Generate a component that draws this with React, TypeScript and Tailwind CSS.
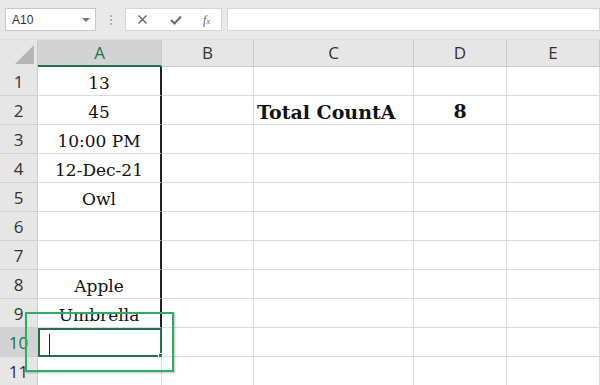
import React from 'react';

const cols = ['A', 'B', 'C', 'D', 'E'];
const widths = ['w-[124px]', 'w-[92px]', 'w-[160px]', 'w-[93px]', 'w-[93px]'];

const colA: Record<number, string> = {
  1: '13',
  2: '45',
  3: '10:00 PM',
  4: '12-Dec-21',
  5: 'Owl',
  8: 'Apple',
  9: 'Umbrella',
};

const serif = { fontFamily: 'Georgia, "DejaVu Serif", serif' };
const sans = { fontFamily: '"Open Sans", "Noto Sans", sans-serif' };

function Toolbar() {
  return (
    <div className="flex h-[40px] items-start bg-[#e8e8e8] pt-[8px] pl-[5px] border-b border-[#dcdcdc]">
      <div className="flex h-[23px] w-[91px] items-center justify-between border border-[#c8c8c8] bg-white pl-[6px] pr-[5px]">
        <span className="text-[12px] text-[#333]" style={{ fontFamily: '"Liberation Sans", Arial, sans-serif' }}>A10</span>
        <span className="h-0 w-0 border-x-[4px] border-t-[4px] border-x-transparent border-t-[#777]" />
      </div>
      <div className="flex h-[23px] w-[29px] flex-col items-center justify-center gap-[2px]">
        <span className="h-[2px] w-[2px] bg-[#b0b0b0]" />
        <span className="h-[2px] w-[2px] bg-[#b0b0b0]" />
        <span className="h-[2px] w-[2px] bg-[#b0b0b0]" />
      </div>
      <div className="flex h-[23px] w-[97px] items-center border border-[#d6d6d6] bg-white">
        <svg className="ml-[11px]" width="11" height="11" viewBox="0 0 11 11">
          <path d="M1.5 1.5 L9.5 9.5 M9.5 1.5 L1.5 9.5" stroke="#6a6a6a" strokeWidth="1.5" />
        </svg>
        <svg className="ml-[22px]" width="12" height="10" viewBox="0 0 12 10">
          <path d="M1 5 L4.5 8.5 L11 1.5" stroke="#6a6a6a" strokeWidth="2" fill="none" />
        </svg>
        <span className="ml-[21px] text-[12px] italic text-[#6a6a6a]" style={{ fontFamily: '"Liberation Serif", serif' }}>
          f<span className="text-[9px]">x</span>
        </span>
      </div>
      <div className="ml-[5px] h-[23px] flex-1 border border-[#d6d6d6] bg-white" />
    </div>
  );
}

export default function App() {
  const rows = Array.from({ length: 11 }, (_, i) => i + 1);
  return (
    <div className="relative h-[385px] w-[600px] overflow-hidden bg-white">
      <Toolbar />
      {/* column headers */}
      <div className="flex h-[27px] bg-[#e6e6e6]" style={sans}>
        <div className="flex w-[38px] items-end justify-end border-r border-[#c9c9c9] pb-[3px] pr-[3px]">
          <span className="h-0 w-0" style={{ borderBottom: '19px solid #b5b5b5', borderLeft: '19px solid transparent' }} />
        </div>
        {cols.map((c, i) => (
          <div
            key={c}
            className={`flex items-center justify-center border-r border-[#c9c9c9] text-[17px] ${widths[i]} ${
              c === 'A' ? 'border-b-2 border-b-[#217346] bg-[#d3d3d3] text-[#217346]' : 'border-b border-b-[#c9c9c9] text-[#333]'
            }`}
          >
            {c}
          </div>
        ))}
      </div>
      {/* rows */}
      {rows.map((r) => (
        <div key={r} className="flex h-[29px]">
          <div
            className={`flex w-[38px] items-center justify-center border-b border-r border-[#cfcfcf] pt-[1px] text-[17px] ${
              r === 10 ? 'bg-[#d3d3d3] text-[#217346]' : 'bg-[#e6e6e6] text-[#333]'
            }`}
            style={sans}
          >
            {r}
          </div>
          {/* column A */}
          <div
            className={`relative flex w-[124px] items-center justify-center text-[17px] text-[#111] ${
              r === 10
                ? 'border-2 border-[#217346]'
                : r <= 9
                ? 'border-b border-b-[#dadada] border-r-2 border-r-[#222]'
                : 'border-b border-r border-[#dadada]'
            }`}
            style={serif}
          >
            {r === 10 ? (
              <span className="absolute left-[9px] top-[4px] h-[22px] w-[1px] bg-[#222]" />
            ) : (
              <span className="whitespace-nowrap pt-[5px]">{colA[r] ?? ''}</span>
            )}
            {r === 10 && <span className="absolute -bottom-[3px] -right-[3px] h-[5px] w-[5px] border border-white bg-[#217346]" />}
          </div>
          <div className="w-[92px] border-b border-r border-[#dadada]" />
          <div className="flex w-[160px] items-center border-b border-r border-[#dadada] pl-[3px] pt-[5px]">
            {r === 2 && (
              <span className="whitespace-nowrap text-[19px] font-bold text-[#111]" style={serif}>
                Total CountA
              </span>
            )}
          </div>
          <div className="flex w-[93px] items-center justify-center border-b border-r border-[#dadada] pt-[3px]">
            {r === 2 && (
              <span className="text-[19px] font-bold text-[#111]" style={serif}>
                8
              </span>
            )}
          </div>
          <div className="w-[93px] border-b border-r border-[#dadada]" />
        </div>
      ))}
      {/* highlight frame around A10 */}
      <div className="pointer-events-none absolute left-[25px] top-[312px] h-[60px] w-[149px] border-2 border-[#2bb060] shadow-[1px_1px_2px_rgba(0,0,0,0.25)]" />
    </div>
  );
}
